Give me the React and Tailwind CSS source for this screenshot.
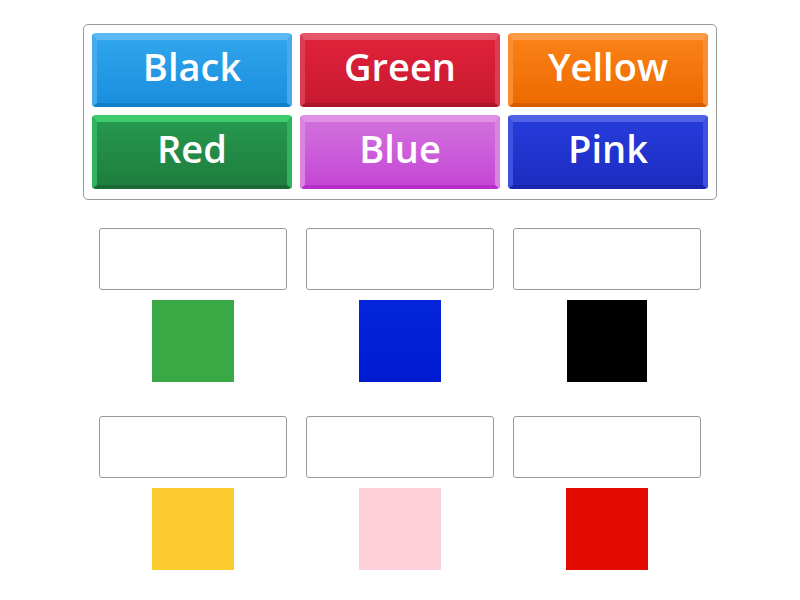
import React from "react";

const tiles = [
  { label: "Black", cls: "bg-gradient-to-b from-[#30a4ec] to-[#1a8ede] border-t-[#5cb9f3] border-x-[#45abee] border-b-[#137fcb]" },
  { label: "Green", cls: "bg-gradient-to-b from-[#e0213a] to-[#c71a30] border-t-[#e65669] border-x-[#dd3d52] border-b-[#ad1628]" },
  { label: "Yellow", cls: "bg-gradient-to-b from-[#fa8116] to-[#ed6a00] border-t-[#fc9c4b] border-x-[#f98d33] border-b-[#d65e00]" },
  { label: "Red", cls: "bg-gradient-to-b from-[#27974e] to-[#1e7e3f] border-t-[#3ccb6c] border-x-[#2fb35d] border-b-[#196a35]" },
  { label: "Blue", cls: "bg-gradient-to-b from-[#d26fdc] to-[#c447d6] border-t-[#df92e6] border-x-[#d884e1] border-b-[#b72ccb]" },
  { label: "Pink", cls: "bg-gradient-to-b from-[#253bd9] to-[#1d2dc2] border-t-[#5063e4] border-x-[#3e52df] border-b-[#1825ad]" },
];

const squares = [
  "w-[82px] bg-[#3aa845]",
  "w-[82px] bg-gradient-to-b from-[#0425db] to-[#001bd2]",
  "w-[80px] bg-black",
  "w-[82px] bg-[#fbcb30]",
  "w-[82px] bg-[#fdd0da]",
  "w-[82px] bg-[#e30b00]",
];

export default function App() {
  return (
    <div className="w-[800px] h-[600px] bg-white pt-[24px]" style={{ fontFamily: '"Open Sans", "Noto Sans", sans-serif' }}>
      <div className="ml-[83px] w-[634px] h-[176px] border border-[#9a9a9a] rounded-[5px] p-2 grid grid-cols-3 gap-2 content-start">
        {tiles.map((t) => (
          <div
            key={t.label}
            className={`h-[74px] rounded-[4px] border-t-[7px] border-x-[5px] border-b-[4px] border-solid flex items-center justify-center text-white font-semibold text-[38px] leading-none pb-[12px] ${t.cls}`}
          >
            {t.label}
          </div>
        ))}
      </div>
      <div className="ml-[99px] mt-[28px] w-[602px] grid grid-cols-3 gap-x-[19px] gap-y-[34px]">
        {squares.map((s, i) => (
          <div key={i} className="flex flex-col items-center">
            <div className="w-full h-[62px] border border-[#999] rounded-[3px] bg-white" />
            <div className={`mt-[10px] h-[82px] ${s}`} />
          </div>
        ))}
      </div>
    </div>
  );
}
